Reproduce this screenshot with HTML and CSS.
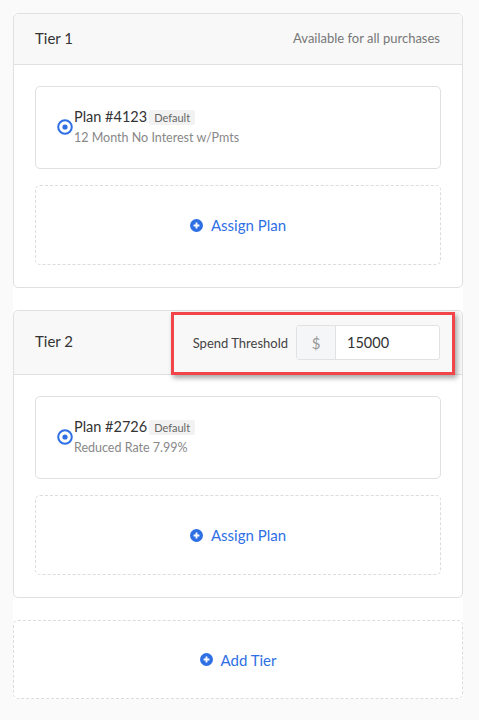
FILE: index.html
```html
<!DOCTYPE html>
<html>
<head>
<meta charset="utf-8">
<link rel="stylesheet" href="styles.css">
</head>
<body>
<div class="wrap">
  <section class="tier">
    <header class="tier-head">
      <span class="tier-name">Tier 1</span>
      <span class="tier-note">Available for all purchases</span>
    </header>
    <div class="tier-body">
      <div class="plan">
        <svg class="radio" width="16" height="16" viewBox="0 0 16 16"><circle cx="8" cy="8" r="6.8" fill="none" stroke="#2f6fe4" stroke-width="2"/><circle cx="8" cy="8" r="2.6" fill="#2f6fe4"/></svg>
        <div class="plan-text">
          <div class="plan-title">Plan #4123<span class="badge">Default</span></div>
          <div class="plan-sub">12 Month No Interest w/Pmts</div>
        </div>
      </div>
      <div class="dashed assign">
        <svg class="plus" width="13" height="13" viewBox="0 0 13 13"><circle cx="6.5" cy="6.5" r="6.5" fill="#2f6fe4"/><path d="M6.5 3.6v5.8M3.6 6.5h5.8" stroke="#fff" stroke-width="1.8"/></svg>
        <span>Assign Plan</span>
      </div>
    </div>
  </section>

  <section class="tier">
    <header class="tier-head tall">
      <span class="tier-name">Tier 2</span>
      <div class="threshold">
        <span class="th-label">Spend Threshold</span>
        <div class="input-group">
          <span class="prefix">$</span>
          <span class="field">15000</span>
        </div>
      </div>
    </header>
    <div class="tier-body">
      <div class="plan">
        <svg class="radio" width="16" height="16" viewBox="0 0 16 16"><circle cx="8" cy="8" r="6.8" fill="none" stroke="#2f6fe4" stroke-width="2"/><circle cx="8" cy="8" r="2.6" fill="#2f6fe4"/></svg>
        <div class="plan-text">
          <div class="plan-title">Plan #2726<span class="badge">Default</span></div>
          <div class="plan-sub">Reduced Rate 7.99%</div>
        </div>
      </div>
      <div class="dashed assign">
        <svg class="plus" width="13" height="13" viewBox="0 0 13 13"><circle cx="6.5" cy="6.5" r="6.5" fill="#2f6fe4"/><path d="M6.5 3.6v5.8M3.6 6.5h5.8" stroke="#fff" stroke-width="1.8"/></svg>
        <span>Assign Plan</span>
      </div>
    </div>
    <div class="highlight"></div>
  </section>

  <div class="dashed add-tier">
    <svg class="plus" width="13" height="13" viewBox="0 0 13 13"><circle cx="6.5" cy="6.5" r="6.5" fill="#2f6fe4"/><path d="M6.5 3.6v5.8M3.6 6.5h5.8" stroke="#fff" stroke-width="1.8"/></svg>
    <span>Add Tier</span>
  </div>
</div>
</body>
</html>
```

FILE: styles.css
```css
html, body {
  margin: 0;
  padding: 0;
  background: #fafafa;
}
body {
  font-family: Lato, "Open Sans", "Liberation Sans", sans-serif;
  color: #333;
}
.wrap {
  width: 450px;
  margin: 13px 0 0 13px;
  background: #fff;
  display: flex;
  flex-direction: column;
  gap: 22px;
}
.tier {
  position: relative;
  border: 1px solid #e0e0e0;
  border-radius: 5px;
  background: #fff;
}
.tier-head {
  display: flex;
  align-items: center;
  justify-content: space-between;
  height: 50px;
  padding: 0 22px 0 21px;
  background: #f8f8f8;
  border-bottom: 1px solid #e0e0e0;
  border-radius: 5px 5px 0 0;
}
.tier-head.tall {
  height: 63px;
}
.tier-name {
  font-size: 15px;
  color: #333;
  margin-top: -3px;
}
.tier-note {
  font-size: 13px;
  color: #777;
  margin-top: -3px;
}
.tier-body {
  padding: 21px 21px 22px;
  display: flex;
  flex-direction: column;
  gap: 16px;
}
.plan {
  display: flex;
  align-items: center;
  height: 81px;
  padding: 0 21px;
  border: 1px solid #e0e0e0;
  border-radius: 5px;
}
.radio {
  flex: none;
  margin-top: -1px;
  margin-right: 1px;
}
.plan-text {
  display: flex;
  flex-direction: column;
  gap: 3px;
  margin-top: 0;
}
.plan-title {
  font-size: 14.5px;
  line-height: 18px;
  color: #333;
  display: flex;
  align-items: center;
}
.badge {
  font-size: 11px;
  line-height: 15px;
  padding: 0 5px;
  margin-left: 2px;
  background: #f2f2f2;
  color: #666;
  border-radius: 2px;
}
.plan-sub {
  font-size: 12.5px;
  line-height: 18px;
  color: #888;
}
.dashed {
  border: 1px dashed #dcdcdc;
  border-radius: 5px;
  display: flex;
  align-items: center;
  justify-content: center;
  gap: 8px;
  color: #2f6fe4;
  font-size: 15px;
}
.assign {
  height: 78px;
}
.add-tier {
  height: 77px;
}
.plus {
  flex: none;
}
.threshold {
  display: flex;
  align-items: center;
  gap: 8px;
}
.th-label {
  font-size: 13px;
  color: #444;
}
.input-group {
  display: flex;
  height: 35px;
  border: 1px solid #e2e2e2;
  border-radius: 3px;
  box-sizing: border-box;
  background: #fff;
}
.prefix {
  width: 38px;
  display: flex;
  align-items: center;
  justify-content: center;
  background: #f5f6f8;
  border-right: 1px solid #e2e2e2;
  color: #999;
  font-size: 15px;
}
.field {
  width: 92px;
  display: flex;
  align-items: center;
  padding-left: 11px;
  font-size: 14.5px;
  color: #333;
}
.highlight {
  position: absolute;
  left: 157px;
  top: 1px;
  width: 278px;
  height: 57px;
  border: 3px solid #f2454a;
  box-shadow: 2px 3px 5px rgba(0, 0, 0, 0.35);
  pointer-events: none;
}
```
